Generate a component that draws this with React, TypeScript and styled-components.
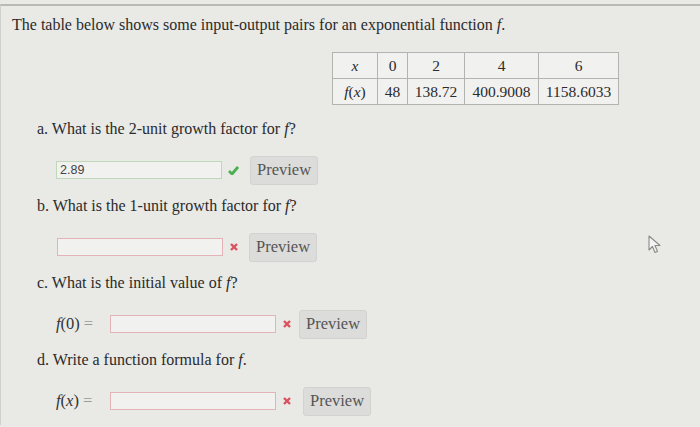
import styled, { createGlobalStyle } from "styled-components";

const GlobalStyle = createGlobalStyle`
  html, body {
    margin: 0;
    padding: 0;
    background: #e9e9e6;
  }
  body {
    font-family: "Liberation Serif", "Times New Roman", serif;
    color: #2b2b2b;
  }
`;

const Frame = styled.div`
  position: relative;
  margin-top: 4px;
  height: 421px;
  border-top: 2px solid #b9b9b7;
  border-left: 1px solid #d0d0ce;
  box-sizing: border-box;
  overflow: hidden;
`;

const Intro = styled.p`
  margin: 0;
  padding: 8px 0 0 11px;
  font-size: 16px;
  line-height: 22px;
`;

const Mi = styled.i`
  font-style: italic;
  font-family: "Liberation Serif", serif;
`;

const ValueTable = styled.table`
  margin: 16px 0 0 331px;
  border-collapse: collapse;
  background: #f1f1ef;
  font-size: 15.5px;
`;

const Cell = styled.td<{ w: number }>`
  width: ${(p) => p.w}px;
  height: 26px;
  padding: 0;
  border: 1px solid #b3b3b1;
  text-align: center;
  box-sizing: border-box;
`;

const Questions = styled.div`
  padding: 14px 0 0 36px;
  display: flex;
  flex-direction: column;
`;

const Question = styled.div`
  display: flex;
  flex-direction: column;
  margin-bottom: 12px;
`;

const Prompt = styled.div`
  font-size: 16px;
  line-height: 20px;
`;

const AnswerRow = styled.div<{ indent: number }>`
  display: flex;
  align-items: center;
  height: 28px;
  margin: 17px 0 0 ${(p) => p.indent}px;
`;

const Label = styled.span`
  font-size: 16.5px;
  width: 54px;
  color: #333;
`;

const Eq = styled.span`
  color: #9a9a98;
  margin-left: 4px;
`;

const Field = styled.div<{ state: "ok" | "bad" }>`
  width: 166px;
  height: 18px;
  box-sizing: border-box;
  background: #f1f1ef;
  border: 1px solid ${(p) => (p.state === "ok" ? "#bfd8bc" : "#e2b4b8")};
  font-family: "Liberation Sans", Arial, sans-serif;
  font-size: 12.5px;
  line-height: 16px;
  padding-left: 3px;
  color: #444;
`;

const Mark = styled.span`
  display: inline-flex;
  width: 14px;
  margin-left: 4px;
  justify-content: center;
`;

const PreviewButton = styled.button<{ gap: number }>`
  margin-left: ${(p) => p.gap}px;
  height: 29px;
  padding: 0 6px;
  background: #dcdcda;
  border: 1px solid #d2d2d0;
  border-radius: 3px;
  font-family: "Liberation Serif", serif;
  font-size: 16.5px;
  color: #555;
`;

const Cursor = styled.svg`
  position: absolute;
  left: 647px;
  top: 229px;
`;

const Check = () => (
  <svg width="11" height="9" viewBox="0 0 11 9">
    <path d="M1 5 L4 8 L10 1" fill="none" stroke="#4caf50" strokeWidth="2.8" strokeLinejoin="round" />
  </svg>
);

const Cross = () => (
  <svg width="8" height="8" viewBox="0 0 8 8">
    <path d="M1 1 L7 7 M7 1 L1 7" stroke="#d9525e" strokeWidth="2.4" />
  </svg>
);

const header = ["0", "2", "4", "6"];
const values = ["48", "138.72", "400.9008", "1158.6033"];
const widths = [30, 57, 74, 80];

export default function App() {
  return (
    <>
      <GlobalStyle />
      <Frame>
        <Intro>
          The table below shows some input-output pairs for an exponential function <Mi>f</Mi>.
        </Intro>
        <ValueTable>
          <tbody>
            <tr>
              <Cell w={45}>
                <Mi>x</Mi>
              </Cell>
              {header.map((h, i) => (
                <Cell key={h} w={widths[i]}>
                  {h}
                </Cell>
              ))}
            </tr>
            <tr>
              <Cell w={45}>
                <Mi>f</Mi>(<Mi>x</Mi>)
              </Cell>
              {values.map((v, i) => (
                <Cell key={v} w={widths[i]}>
                  {v}
                </Cell>
              ))}
            </tr>
          </tbody>
        </ValueTable>
        <Questions>
          <Question>
            <Prompt>
              a. What is the 2-unit growth factor for <Mi>f</Mi>?
            </Prompt>
            <AnswerRow indent={19}>
              <Field state="ok">2.89</Field>
              <Mark>
                <Check />
              </Mark>
              <PreviewButton gap={10}>Preview</PreviewButton>
            </AnswerRow>
          </Question>
          <Question>
            <Prompt>
              b. What is the 1-unit growth factor for <Mi>f</Mi>?
            </Prompt>
            <AnswerRow indent={20}>
              <Field state="bad" />
              <Mark>
                <Cross />
              </Mark>
              <PreviewButton gap={8}>Preview</PreviewButton>
            </AnswerRow>
          </Question>
          <Question>
            <Prompt>
              c. What is the initial value of <Mi>f</Mi>?
            </Prompt>
            <AnswerRow indent={19}>
              <Label>
                <Mi>f</Mi>(0)<Eq>=</Eq>
              </Label>
              <Field state="bad" />
              <Mark>
                <Cross />
              </Mark>
              <PreviewButton gap={5}>Preview</PreviewButton>
            </AnswerRow>
          </Question>
          <Question>
            <Prompt>
              d. Write a function formula for <Mi>f</Mi>.
            </Prompt>
            <AnswerRow indent={19}>
              <Label>
                <Mi>f</Mi>(<Mi>x</Mi>)<Eq>=</Eq>
              </Label>
              <Field state="bad" />
              <Mark>
                <Cross />
              </Mark>
              <PreviewButton gap={9}>Preview</PreviewButton>
            </AnswerRow>
          </Question>
        </Questions>
        <Cursor width="16" height="20" viewBox="0 0 16 20">
          <path
            d="M1 1 L1 15 L4.5 11.5 L7 17.5 L9.5 16.5 L7 10.5 L12 10.5 Z"
            fill="#f4f4f2"
            stroke="#8a8a88"
            strokeWidth="1.1"
            strokeLinejoin="round"
          />
        </Cursor>
      </Frame>
    </>
  );
}
